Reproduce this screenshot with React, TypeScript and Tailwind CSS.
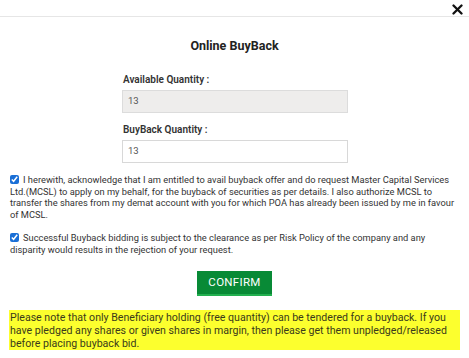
import { useState } from "react";

const CheckRow = ({ checked, text }: { checked: boolean; text: string }) => {
  const [on, setOn] = useState(checked);
  return (
    <label className="block text-[9.3px] leading-[11.5px] text-[#333]">
      <input
        type="checkbox"
        checked={on}
        onChange={() => setOn(!on)}
        className="w-[9px] h-[9px] mr-[4px] align-[-1px] accent-[#1a6fd6]"
      />
      {text}
    </label>
  );
};

const App = () => {
  return (
    <div
      className="w-[469px] h-[358px] bg-white overflow-hidden"
      style={{ fontFamily: "Roboto, 'Liberation Sans', sans-serif" }}
    >
      <div className="h-[17px] border-b border-[#e6e6e6] flex justify-end pr-[6px] pt-[2px]">
        <button className="text-[#111] leading-none">
          <svg width="11" height="11" viewBox="0 0 11 11">
            <path d="M1.5 1.5 L9.5 9.5 M9.5 1.5 L1.5 9.5" stroke="#111" strokeWidth="2.3" strokeLinecap="round" />
          </svg>
        </button>
      </div>

      <div className="pt-[21px] text-center text-[12.5px] leading-[16px] font-bold text-[#222]">
        Online BuyBack
      </div>

      <div className="w-[226px] mt-[20px] ml-[122px]">
        <div className="text-[10px] leading-[12px] font-semibold text-[#333] pl-[1px]">
          Available Quantity :
        </div>
        <div className="mt-[4px] h-[23px] bg-[#eeedec] border border-[#dcdcdc] flex items-center px-[5px] text-[9.5px] text-[#555]">
          13
        </div>
        <div className="mt-[11px] text-[10px] leading-[12px] font-semibold text-[#333] pl-[1px]">
          BuyBack Quantity :
        </div>
        <div className="mt-[4px] h-[23px] bg-white border border-[#d8d8d8] flex items-center px-[5px] text-[9.5px] text-[#555]">
          13
        </div>
      </div>

      <div className="px-[10px] mt-[11px] flex flex-col gap-[12px]">
        <CheckRow
          checked
          text="I herewith, acknowledge that I am entitled to avail buyback offer and do request Master Capital Services Ltd.(MCSL) to apply on my behalf, for the buyback of securities as per details. I also authorize MCSL to transfer the shares from my demat account with you for which POA has already been issued by me in favour of MCSL."
        />
        <CheckRow
          checked
          text="Successful Buyback bidding is subject to the clearance as per Risk Policy of the company and any disparity would results in the rejection of your request."
        />
      </div>

      <div className="flex justify-center mt-[16px]">
        <button className="w-[75px] h-[25px] bg-[#088a36] border-b-2 border-[#22b04f] text-white text-[11.5px] tracking-[0.3px]">
          CONFIRM
        </button>
      </div>

      <div className="mx-[9px] mt-[14px] bg-[#fcff2e] px-[1px] py-[0.5px] text-[10.6px] leading-[13px] text-[#3a3a1a]">
        Please note that only Beneficiary holding (free quantity) can be tendered for a buyback. If you have pledged any shares or given shares in margin, then please get them unpledged/released before placing buyback bid.
      </div>
    </div>
  );
};

export default App;
